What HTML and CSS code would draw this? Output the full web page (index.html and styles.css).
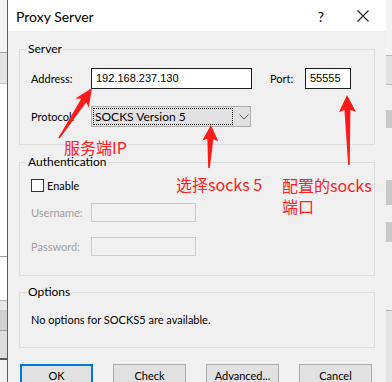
FILE: index.html
```html
<!DOCTYPE html>
<html lang="en">
<head>
    <meta charset="UTF-8">
    <title>Proxy Server</title>
    <link rel="stylesheet" href="styles.css">
</head>
<body>

    <div class="desk">
        <div class="side side-left"></div>

        <div class="dialog">
            <div class="titlebar">
                <span class="title">Proxy Server</span>
                <span class="help">?</span>
                <svg class="close" width="12" height="12" viewBox="0 0 12 12">
                    <path d="M0.5 0.5 L11.5 11.5 M11.5 0.5 L0.5 11.5" stroke="#222" stroke-width="1.1" fill="none"/>
                </svg>
            </div>

            <div class="dialog-body">
                <fieldset class="group group-server">
                    <legend>Server</legend>
                    <div class="row">
                        <label class="lbl">Address:</label>
                        <div class="field field-address">192.168.237.130</div>
                        <label class="lbl lbl-port">Port:</label>
                        <div class="field field-port">55555</div>
                    </div>
                    <div class="row row-protocol">
                        <label class="lbl">Protocol:</label>
                        <div class="select">
                            <span class="select-value">SOCKS Version 5</span>
                            <svg class="chevron" width="10" height="6" viewBox="0 0 10 6">
                                <path d="M0.5 0.5 L5 5 L9.5 0.5" stroke="#555" stroke-width="1" fill="none"/>
                            </svg>
                        </div>
                    </div>
                </fieldset>

                <fieldset class="group group-auth">
                    <legend>Authentication</legend>
                    <div class="check-row">
                        <span class="checkbox"></span>
                        <span>Enable</span>
                    </div>
                    <div class="row row-user">
                        <label class="lbl lbl-off">Username:</label>
                        <div class="field field-off"></div>
                    </div>
                    <div class="row row-pass">
                        <label class="lbl lbl-off">Password:</label>
                        <div class="field field-off"></div>
                    </div>
                </fieldset>

                <fieldset class="group group-options">
                    <legend>Options</legend>
                    <p class="options-text">No options for SOCKS5 are available.</p>
                </fieldset>

                <div class="buttons">
                    <button class="btn btn-default">OK</button>
                    <button class="btn">Check</button>
                    <button class="btn">Advanced...</button>
                    <button class="btn">Cancel</button>
                </div>
            </div>
        </div>

        <div class="side side-right"></div>

        <!-- red annotations drawn over the screenshot -->
        <svg class="marks" width="392" height="382" viewBox="0 0 392 382">
            <g fill="#ff1a1a">
                <polygon transform="translate(92 88) rotate(33.4)" points="0,0 8,18 3,15 0.8,60 -0.8,60 -3,15 -8,18"/>
                <polygon transform="translate(211 125) rotate(2.7)" points="0,0 8,16 3,14 0.8,43 -0.8,43 -3,14 -8,16"/>
                <polygon transform="translate(347 95) rotate(-1.6)" points="0,0 8.5,17 3,15 0.8,70 -0.8,70 -3,15 -8.5,17"/>
            </g>
        </svg>
        <div class="note note-ip">服务端IP</div>
        <div class="note note-proto">选择socks 5</div>
        <div class="note note-port">配置的socks<br>端口</div>
    </div>

</body>
</html>
```

FILE: styles.css
```css
body {
    margin: 0;
    font-family: Lato, "Noto Sans", sans-serif;
    font-size: 11px;
    color: #000;
}
.desk {
    position: relative;
    display: flex;
    width: 392px;
    height: 382px;
    overflow: hidden;
    background-color: #e6e6e6;
}
.side {
    flex: none;
}
.side-left {
    width: 7px;
    background: linear-gradient(to bottom,
        #f3f3f3 0, #f3f3f3 52px, #a0a0a0 52px, #a0a0a0 53px,
        #e4e4e4 53px, #e4e4e4 83px, #c8c8c8 83px, #c8c8c8 84px,
        #ffffff 84px, #ffffff 256px, #a0a0a0 256px, #a0a0a0 257px,
        #ffffff 257px, #ffffff 300px, #b0b0b0 300px, #b0b0b0 301px,
        #e8e8e8 301px, #e8e8e8 310px, #d0d0d0 310px, #d0d0d0 330px,
        #a0a0a0 330px, #a0a0a0 331px, #dcdcdc 331px, #dcdcdc 358px,
        #555 358px, #555 360px, #f0f0f0 360px);
}
.side-right {
    width: 6px;
    background: linear-gradient(to bottom,
        #f3f3f3 0, #f3f3f3 55px, #b8b8b8 55px, #b8b8b8 56px,
        #e2e2e2 56px, #e2e2e2 84px, #c0c0c0 84px, #c0c0c0 85px,
        #f0f0f0 85px, #f0f0f0 110px, #c8c8c8 110px, #c8c8c8 128px,
        #f0f0f0 128px, #f0f0f0 180px, #c8c8c8 180px, #c8c8c8 205px,
        #f0f0f0 205px, #f0f0f0 222px, #c8c8c8 222px, #c8c8c8 242px,
        #f0f0f0 242px, #f0f0f0 310px, #b0b0b0 310px, #b0b0b0 311px,
        #e4e4e4 311px);
}
.dialog {
    flex: none;
    width: 378px;
    border-left: 1px solid #5c5c5c;
    background-color: #f0f0f0;
    box-shadow: 1px 0 0 #cfcfcf;
    display: flex;
    flex-direction: column;
    overflow: hidden;
}
.titlebar {
    flex: none;
    height: 31px;
    background-color: #ffffff;
    display: flex;
    align-items: center;
    padding: 0 17px 0 8px;
}
.title {
    font-size: 14px;
    flex: 1;
    padding-top: 1px;
}
.help {
    font-size: 14px;
    margin-right: 33px;
    padding-top: 1px;
}
.dialog-body {
    flex: none;
    padding: 10px 11px 0 11px;
    display: flex;
    flex-direction: column;
}
.dialog-body > * {
    flex: none;
}
.group {
    margin: 0;
    padding: 0 11px;
    border: 1px solid #dcdcdc;
    min-width: 0;
    box-sizing: border-box;
}
.group legend {
    margin-left: -4px;
    padding: 0 1px;
    font-size: 12px;
    line-height: 16px;
}
.group-server {
    height: 104px;
    padding-top: 11px;
}
.group-auth {
    margin-top: 9px;
    height: 122px;
    padding-top: 9px;
}
.group-options {
    margin-top: 8px;
    height: 64px;
}
.row {
    display: flex;
    align-items: center;
}
.row-protocol {
    margin-top: 17px;
}
.row-user {
    margin-top: 11px;
}
.row-pass {
    margin-top: 15px;
}
.lbl {
    width: 60px;
    flex: none;
}
.lbl-port {
    width: 35px;
    margin-left: 18px;
}
.lbl-off {
    color: #a0a0a0;
}
.field {
    height: 21px;
    box-sizing: border-box;
    border: 1px solid #1e1e1e;
    background-color: #ffffff;
    font-family: "Liberation Sans", Arial, sans-serif;
    font-size: 11px;
    line-height: 19px;
    padding-left: 4px;
}
.field-address {
    width: 161px;
}
.field-port {
    width: 46px;
}
.field-off {
    width: 105px;
    height: 19px;
    border-color: #cccccc;
    background-color: #f0f0f0;
}
.select {
    width: 160px;
    height: 21px;
    box-sizing: border-box;
    border: 1px solid #adadad;
    background-color: #e1e1e1;
    display: flex;
    align-items: center;
    padding: 1px;
}
.select-value {
    width: 140px;
    height: 17px;
    box-sizing: border-box;
    border: 1px dotted #000;
    font-size: 12px;
    line-height: 15px;
    padding-left: 1px;
}
.chevron {
    margin-left: 6px;
}
.check-row {
    display: flex;
    align-items: center;
    gap: 3px;
}
.checkbox {
    width: 13px;
    height: 13px;
    box-sizing: border-box;
    border: 1px solid #333;
    background-color: #ffffff;
}
.options-text {
    margin: 12px 0 0 0;
    line-height: 16px;
}
.buttons {
    display: flex;
    gap: 20px;
    margin-top: 16px;
    padding-left: 1px;
}
.btn {
    width: 73px;
    height: 23px;
    box-sizing: border-box;
    border: 1px solid #adadad;
    background-color: #e1e1e1;
    font-family: Lato, "Noto Sans", sans-serif;
    font-size: 11px;
    padding: 0;
}
.btn-default {
    border: 2px solid #0078d7;
}
.marks {
    position: absolute;
    left: 0;
    top: 0;
}
.note {
    position: absolute;
    color: #ff2020;
    font-family: "Noto Sans CJK SC", "Noto Sans", sans-serif;
    font-size: 16px;
    line-height: 21px;
}
.note-ip {
    left: 64px;
    top: 137px;
}
.note-proto {
    left: 176px;
    top: 174px;
}
.note-port {
    left: 282px;
    top: 175px;
}
```
